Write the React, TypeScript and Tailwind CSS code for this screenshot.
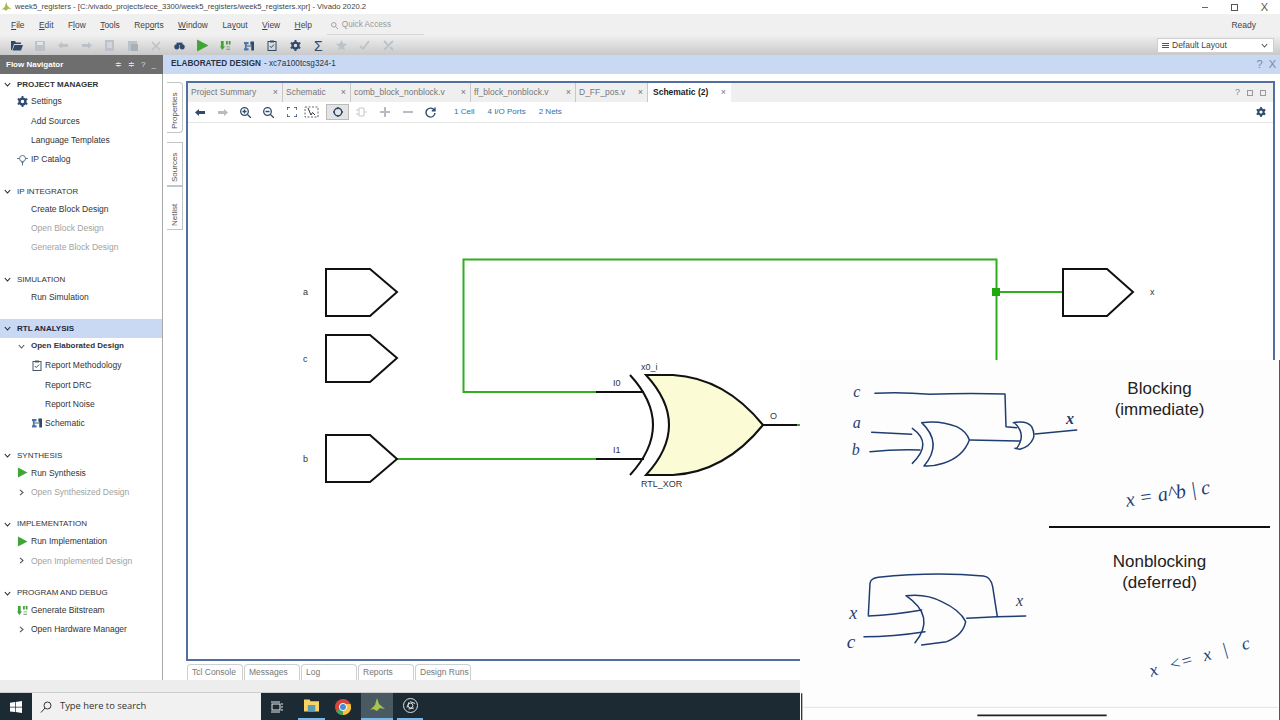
import type { ReactNode } from 'react'

const font = "font-['Liberation_Sans',Arial,sans-serif]"

const Play = ({ size = 11 }: { size?: number }) => (
  <svg width={size} height={size} viewBox="0 0 12 12">
    <path d="M1 0.5 L11.5 6 L1 11.5 Z" fill="#3fa535" />
  </svg>
)

const Gear = ({ size = 11, color = '#2f4a6d' }: { size?: number; color?: string }) => (
  <svg width={size} height={size} viewBox="0 0 12 12">
    <circle cx="6" cy="6" r="3.2" fill="none" stroke={color} strokeWidth="2.6" />
    <path d="M6 0v2.4M6 9.6V12M0.8 3l2 1.2M9.2 7.8l2 1.2M0.8 9l2-1.2M9.2 4.2l2-1.2" stroke={color} strokeWidth="2" />
  </svg>
)

const Bits = () => (
  <svg width="11" height="11" viewBox="0 0 12 12">
    <path d="M1 1h3v6h1.5L2.5 11 0 7h1zM6.5 1h2v4h-2zM9.5 1h2v4h-2z" fill="#3fa535" />
    <path d="M7 7h4v1H7zM7 9.5h4v1H7z" fill="#7a8a7a" />
  </svg>
)

const SchemIcon = () => (
  <svg width="10" height="10" viewBox="0 0 11 11">
    <path d="M0 1h5v2.5H3V8h2v2.5H0V8h1V3.5H0z" fill="#4a76ab" />
    <path d="M7 0.5h4v10H8V4H7z" fill="#2f4a6d" />
    <path d="M3 5h5v1H3z" fill="#2f4a6d" />
  </svg>
)

const Report = ({ color = '#46576b' }: { color?: string }) => (
  <svg width="10" height="11" viewBox="0 0 10 11" fill="none">
    <rect x="1" y="1.5" width="8" height="9" stroke={color} />
    <rect x="3" y="0.5" width="4" height="2" fill={color} />
    <path d="M2.8 6l1.5 1.6L7 4.5" stroke={color} />
  </svg>
)

const Chip = () => (
  <svg width="11" height="12" viewBox="0 0 11 12" fill="none" stroke="#5d7692">
    <circle cx="5.5" cy="4.5" r="3" />
    <path d="M0 4.5h2.5M8.5 4.5H11M4 8h3M5.5 8v3.5" />
  </svg>
)

const Chevron = ({ open = true, dark = false }: { open?: boolean; dark?: boolean }) => (
  <svg width="7" height="7" viewBox="0 0 7 7" fill="none" stroke={dark ? '#222' : '#555'} strokeWidth="1.1">
    {open ? <path d="M0.8 2l2.7 3 2.7-3" /> : <path d="M2 0.8l3 2.7-3 2.7" />}
  </svg>
)

type NavItem = {
  label: string
  indent?: boolean
  icon?: ReactNode
  caret?: 'open' | 'closed'
  muted?: boolean
  bold?: boolean
}

type NavSection = { title: string; strong?: boolean; active?: boolean; gap: string; items: NavItem[] }

const sections: NavSection[] = [
  {
    title: 'PROJECT MANAGER',
    strong: true,
    gap: 'mt-0',
    items: [
      { label: 'Settings', icon: <Gear /> },
      { label: 'Add Sources' },
      { label: 'Language Templates' },
      { label: 'IP Catalog', icon: <Chip /> },
    ],
  },
  {
    title: 'IP INTEGRATOR',
    gap: 'mt-[14px]',
    items: [
      { label: 'Create Block Design' },
      { label: 'Open Block Design', muted: true },
      { label: 'Generate Block Design', muted: true },
    ],
  },
  { title: 'SIMULATION', gap: 'mt-[14px]', items: [{ label: 'Run Simulation' }] },
  {
    title: 'RTL ANALYSIS',
    strong: true,
    active: true,
    gap: 'mt-[12px]',
    items: [
      { label: 'Open Elaborated Design', caret: 'open', bold: true },
      { label: 'Report Methodology', indent: true, icon: <Report /> },
      { label: 'Report DRC', indent: true },
      { label: 'Report Noise', indent: true },
      { label: 'Schematic', indent: true, icon: <SchemIcon /> },
    ],
  },
  {
    title: 'SYNTHESIS',
    gap: 'mt-[14px]',
    items: [
      { label: 'Run Synthesis', icon: <Play /> },
      { label: 'Open Synthesized Design', caret: 'closed', muted: true },
    ],
  },
  {
    title: 'IMPLEMENTATION',
    gap: 'mt-[14px]',
    items: [
      { label: 'Run Implementation', icon: <Play /> },
      { label: 'Open Implemented Design', caret: 'closed', muted: true },
    ],
  },
  {
    title: 'PROGRAM AND DEBUG',
    gap: 'mt-[14px]',
    items: [
      { label: 'Generate Bitstream', icon: <Bits /> },
      { label: 'Open Hardware Manager', caret: 'closed' },
    ],
  },
]

function FlowNavigator() {
  return (
    <nav className="w-[163px] shrink-0 border-r border-[#a9a9a9] pt-[2px] bg-white">
      {sections.map((s) => (
        <div key={s.title} className={s.gap}>
          <div
            className={`flex items-center gap-[6px] pl-[4px] pt-[1px] ${
              s.active ? 'h-[19px] bg-[#c9d9f3] text-[#1c2740]' : 'h-[16px] text-[#333]'
            } ${s.strong ? 'font-bold' : ''} text-[8px]`}
          >
            <Chevron dark />
            <span>{s.title}</span>
          </div>
          <div className={s.active ? '-mt-[1px]' : ''}>
            {s.items.map((item) => (
              <div
                key={item.label}
                className={`relative flex h-[19.33px] items-center ${item.bold ? 'text-[8px] font-bold' : 'text-[8.5px]'} ${
                  item.indent ? 'pl-[45px]' : 'pl-[31px]'
                } ${item.muted ? 'text-[#a2a2a2]' : 'text-[#333]'}`}
              >
                {item.icon && (
                  <span className={`absolute top-[4px] ${item.indent ? 'left-[32px]' : 'left-[17px]'}`}>{item.icon}</span>
                )}
                {item.caret && (
                  <span className="absolute left-[18px] top-[6px]">
                    <Chevron open={item.caret === 'open'} />
                  </span>
                )}
                {item.label}
              </div>
            ))}
          </div>
        </div>
      ))}
    </nav>
  )
}

const Ic = ({ children, boxed }: { children: ReactNode; boxed?: boolean }) => (
  <div className={`flex h-[16px] w-[23px] shrink-0 items-center justify-center ${boxed ? 'bg-[#e4e4e4] border border-[#bbb]' : ''}`}>
    {children}
  </div>
)

function MainToolbar() {
  const dim = '#bcc2c9'
  return (
    <div className="flex h-[19px] items-center gap-[0.2px] pl-[5.5px] bg-gradient-to-b from-[#eeeeee] to-[#c9c9c9]">
      <Ic>
        <svg width="12" height="11" viewBox="0 0 12 11"><path d="M0 1h4l1 1.5h5V4H3L1 10H0zM3.5 5H12l-2 5.5H1.5z" fill="#2f4a6d" /></svg>
      </Ic>
      <Ic><svg width="10" height="10" viewBox="0 0 10 10"><rect width="10" height="10" fill={dim} /><rect x="2" y="1" width="6" height="3" fill="#e4e4e4" /></svg></Ic>
      <Ic><svg width="10" height="7" viewBox="0 0 10 7"><path d="M0 3.5L4 0v2h6v3H4v2z" fill={dim} /></svg></Ic>
      <Ic><svg width="10" height="7" viewBox="0 0 10 7"><path d="M10 3.5L6 0v2H0v3h6v2z" fill={dim} /></svg></Ic>
      <Ic><svg width="9" height="11" viewBox="0 0 9 11"><rect width="9" height="11" fill={dim} /><path d="M2 3h5M2 5h5M2 7h5" stroke="#e8e8e8" /></svg></Ic>
      <Ic><svg width="10" height="11" viewBox="0 0 10 11"><rect y="1" width="9" height="10" fill={dim} /><rect x="3" y="4" width="7" height="7" fill="#a8afb6" /></svg></Ic>
      <Ic><svg width="10" height="10" viewBox="0 0 10 10"><path d="M1 1l8 8M9 1l-8 8" stroke={dim} strokeWidth="1.6" /></svg></Ic>
      <Ic><svg width="11" height="8" viewBox="0 0 13 9"><circle cx="3.3" cy="5.5" r="3" fill="#2f4a6d" /><circle cx="9.7" cy="5.5" r="3" fill="#2f4a6d" /><rect x="3" y="0.5" width="7" height="3" fill="#2f4a6d" /></svg></Ic>
      <Ic><Play size={13} /></Ic>
      <Ic><Bits /></Ic>
      <Ic><SchemIcon /></Ic>
      <Ic><Report color="#2f4a6d" /></Ic>
      <Ic><Gear color="#2f4a6d" /></Ic>
      <Ic><span className="text-[14px] leading-none text-[#2f4a6d]">Σ</span></Ic>
      <Ic><svg width="11" height="11" viewBox="0 0 11 11"><path d="M5.5 0l1.6 3.6 3.9.4-3 2.6.9 3.9-3.4-2-3.4 2 .9-3.9-3-2.6 3.9-.4z" fill={dim} /></svg></Ic>
      <Ic><svg width="11" height="11" viewBox="0 0 11 11"><path d="M1 6l3 3 6-8" fill="none" stroke={dim} strokeWidth="1.8" /></svg></Ic>
      <Ic><svg width="11" height="11" viewBox="0 0 11 11"><path d="M1 10l9-9M1 1l4 4M7 7l3 3" stroke={dim} strokeWidth="1.8" /></svg></Ic>
      <div className="ml-auto mr-[6px] flex h-[15px] w-[117px] items-center gap-[3px] border border-[#cfcfcf] bg-white pl-[4px] text-[8.5px] text-[#444]">
        <svg width="7" height="6" viewBox="0 0 7 6"><path d="M0 .5h7M0 2.5h7M0 4.5h7" stroke="#555" /></svg>
        <span>Default Layout</span>
        <span className="ml-auto mr-[5px]"><Chevron /></span>
      </div>
    </div>
  )
}

const tabs = [
  { label: 'Project Summary', w: 'w-[95px]' },
  { label: 'Schematic', w: 'w-[68px]' },
  { label: 'comb_block_nonblock.v', w: 'w-[120px]' },
  { label: 'ff_block_nonblock.v', w: 'w-[105px]' },
  { label: 'D_FF_pos.v', w: 'w-[72px]' },
]

function SchematicDrawing() {
  const green = '#2fae1e'
  return (
    <svg viewBox="188 123 1085 537" className="h-[537px] w-[1085px]">
      <g fill="none" stroke={green} strokeWidth="2">
        <path d="M596 392H463.5V259.5H996.5V362" />
        <path d="M996 292H1063" />
        <path d="M397 459H596" />
        <path d="M797 425H802" />
      </g>
      <rect x="992" y="288" width="8" height="8" fill="#1fa80f" />
      <g fill="#fff" stroke="#111" strokeWidth="2">
        <path d="M326 269H370L397 292L370 316H326Z" />
        <path d="M326 335H370L397 358L370 382H326Z" />
        <path d="M326 435H370L397 459L370 482H326Z" />
        <path d="M1063 269H1107L1133 292L1107 316H1063Z" />
      </g>
      <g fill="none" stroke="#111" strokeWidth="2">
        <path d="M596 392H644M596 459H644M763 425H797" />
        <path d="M630 375Q676 425 630 475" />
        <path d="M646 375H673Q725 378 763 425Q725 472 673 475H646Q692 425 646 375Z" fill="#fbfbd6" />
      </g>
      <g fill="#333" fontSize="9" fontFamily="Liberation Sans, Arial, sans-serif">
        <text x="303" y="295">a</text>
        <text x="303" y="362">c</text>
        <text x="303" y="462">b</text>
        <text x="1150" y="295">x</text>
        <text x="641" y="370">x0_i</text>
        <text x="641" y="487">RTL_XOR</text>
        <text x="613" y="386">I0</text>
        <text x="613" y="453">I1</text>
        <text x="770" y="419">O</text>
      </g>
    </svg>
  )
}

function WhiteboardOverlay() {
  return (
    <div className="absolute bottom-0 right-0 flex h-[360px] w-[480px] justify-end border-r border-[#555] bg-[#fdfdfd]">
      <svg viewBox="0 0 1440 1080" className="absolute inset-0 h-[360px] w-[480px]">
        <g fill="none" stroke="#1f3d72" strokeWidth="4.5" strokeLinecap="round" strokeLinejoin="round">
          <path d="M225 100Q300 95 390 103Q500 98 615 102L618 200L650 203" />
          <path d="M215 217L335 223M210 275Q280 268 360 270" />
          <path d="M337 205Q400 250 337 310" />
          <path d="M365 188Q420 180 470 200Q500 215 508 240Q490 290 430 310Q400 320 372 318Q430 250 365 188" />
          <path d="M510 240L660 243" />
          <path d="M645 190Q680 225 650 265M640 188Q680 180 695 200Q705 220 700 235Q690 260 660 268L645 265" />
          <path d="M705 222L830 210" />
          <path d="M205 765L210 670Q212 655 235 652Q400 635 550 648Q572 650 578 680L592 770" />
          <path d="M205 768Q280 765 365 750M192 830Q280 830 375 815" />
          <path d="M318 707Q380 700 425 725Q480 750 497 785Q490 825 440 845L365 855M318 707Q410 770 345 848" />
          <path d="M500 775L590 770L677 768" />
        </g>
        <g fill="#1f3d72" fontFamily="Liberation Serif, serif" fontStyle="italic" fontSize="48">
          <text x="160" y="110">c</text>
          <text x="158" y="205">a</text>
          <text x="155" y="285">b</text>
          <text x="798" y="192" fontWeight="bold">x</text>
          <text x="148" y="778" fontSize="54">x</text>
          <text x="140" y="864" fontSize="58">c</text>
          <text x="648" y="738">x</text>
          <text x="980" y="440" fontSize="60" transform="rotate(-9 980 440)">x = a^b | c</text>
          <text x="1054" y="950" fontSize="54" transform="rotate(-16 1054 950)">
            x<tspan dx="37">&lt;=</tspan>
            <tspan dx="33">x</tspan>
            <tspan dx="36">|</tspan>
            <tspan dx="45">c</tspan>
          </text>
        </g>
        <path d="M5 1000V1080" stroke="#333" strokeWidth="4" />
        <path d="M10 1042H1435" stroke="#e2e4e8" strokeWidth="3" />
        <path d="M532 1066H920" stroke="#222" strokeWidth="5" />
      </svg>
      <div className="relative mr-[9px] flex w-[221px] flex-col text-center text-[17px] leading-[21px] text-[#222]">
        <div className="pt-[18px]">
          Blocking
          <br />
          (immediate)
        </div>
        <div className="mt-[106px] h-[2px] bg-[#111]" />
        <div className="pt-[23px]">
          Nonblocking
          <br />
          (deferred)
        </div>
      </div>
    </div>
  )
}

function Taskbar() {
  return (
    <div className="flex h-[27px] items-stretch bg-[#1c2b33]">
      <div className="flex w-[32px] items-center justify-center">
        <svg width="12" height="12" viewBox="0 0 12 12" fill="#fff"><path d="M0 1.7L5 1v4.7H0zM5.7.9L12 0v5.7H5.7zM0 6.4h5v4.7l-5-.7zM5.7 6.4H12V12l-6.3-.9z" /></svg>
      </div>
      <div className="flex w-[229px] items-center gap-[8px] bg-[#f1f1f1] pl-[8px] text-[9.4px] text-[#333]">
        <svg width="12" height="12" viewBox="0 0 12 12" fill="none" stroke="#333"><circle cx="7.5" cy="4.5" r="3.5" /><path d="M5 7l-4 4.5" /></svg>
        <span className="font-['Open_Sans',sans-serif]">Type here to search</span>
      </div>
      <div className="flex w-[37px] items-center justify-center pr-[5px]">
        <svg width="12" height="12" viewBox="0 0 12 12" fill="none" stroke="#e8e8e8"><rect x="1" y="3" width="8" height="6" /><path d="M0 1h9M0 11h9M11 2v2M11 5v2M11 8v2" /></svg>
      </div>
      <div className="flex w-[27px] items-center justify-center border-b-2 border-[#76b9ed]">
        <svg width="15" height="13" viewBox="0 0 16 13"><path d="M0 0h6l1 2h9v11H0z" fill="#f6d365" /><rect x="4" y="6" width="8" height="7" fill="#5b9bb5" /></svg>
      </div>
      <div className="flex w-[36px] items-center justify-center">
        <svg width="16" height="16" viewBox="0 0 16 16">
          <circle cx="8" cy="8" r="8" fill="#d9453a" />
          <path d="M8 8L1 12A8 8 0 0 0 8 16L12 8z" fill="#3aa757" />
          <path d="M8 16A8 8 0 0 0 15.5 5H8z" fill="#f5c33b" />
          <circle cx="8" cy="8" r="3.6" fill="#4a89dc" stroke="#fff" />
        </svg>
      </div>
      <div className="flex w-[32px] items-center justify-center border-b-2 border-[#76b9ed] bg-[#4a5a62]">
        <svg width="15" height="15" viewBox="0 0 15 15"><path d="M7 0l2 6 6 5-5-1-3 3-4-2-3 1 5-5z" fill="#a8c44a" /></svg>
      </div>
      <div className="ml-[4px] flex w-[26px] items-center justify-center border-b-2 border-[#76b9ed]">
        <svg width="15" height="15" viewBox="0 0 15 15" fill="none" stroke="#ddd"><circle cx="7.5" cy="7.5" r="7" /><circle cx="7.5" cy="7.5" r="2.4" /><path d="M7 3.5l5 2M4 9.5L6 4M11 10L5.5 11" /></svg>
      </div>
    </div>
  )
}

export default function App() {
  // before, mnemonic letter, after
  const menus = [
    ['', 'F', 'ile'],
    ['', 'E', 'dit'],
    ['F', 'l', 'ow'],
    ['', 'T', 'ools'],
    ['Rep', 'o', 'rts'],
    ['', 'W', 'indow'],
    ['La', 'y', 'out'],
    ['', 'V', 'iew'],
    ['', 'H', 'elp'],
  ]
  return (
    <div className={`relative flex h-[720px] w-[1280px] flex-col overflow-hidden bg-white ${font}`}>
      {/* title bar */}
      <div className="flex h-[14px] items-center bg-white pl-[1px] text-[7.7px] text-[#444]">
        <svg width="11" height="10" viewBox="0 0 15 15"><path d="M7 0l2 6 6 5-5-1-3 3-4-2-3 1 5-5z" fill="#a8b84a" /></svg>
        <span className="ml-[3px]">week5_registers - [C:/vivado_projects/ece_3300/week5_registers/week5_registers.xpr] - Vivado 2020.2</span>
        <div className="ml-auto mr-[12px] flex items-center gap-[23px] text-[#555]">
          <span className="h-px w-[6px] bg-[#666]" />
          <span className="h-[7px] w-[7px] border border-[#555]" />
          <span className="text-[11px] leading-none">X</span>
        </div>
      </div>

      {/* menu bar */}
      <div className="flex h-[22px] items-center bg-[#f0f0f0] pl-[11px] pt-[1px] text-[8.4px] text-[#444]">
        <div className="flex gap-[14.5px]">
          {menus.map(([a, b, c]) => (
            <span key={a + b + c}>
              {a}
              <u>{b}</u>
              {c}
            </span>
          ))}
        </div>
        <div className="ml-[15px] flex h-[18px] w-[97px] items-center gap-[4px] border-b border-[#d5d5d5] pl-[4px] text-[8.2px] text-[#999]">
          <svg width="7" height="7" viewBox="0 0 8 8" fill="none" stroke="#999"><circle cx="3.2" cy="3.2" r="2.6" /><path d="M5 5l3 3" /></svg>
          Quick Access
        </div>
        <span className="ml-auto mr-[24px] text-[8.5px] text-[#444]">Ready</span>
      </div>

      <MainToolbar />

      {/* header bars */}
      <div className="flex h-[19px] items-stretch">
        <div className="flex w-[163px] items-center bg-[#6e6e6e] pl-[6px] pr-[7px] text-[8px] font-bold text-white">
          <span>Flow Navigator</span>
          <span className="ml-auto flex items-center gap-[6px] font-normal text-[#ddd]">
            <span>≑</span><span>≑</span><span>?</span><span>_</span>
          </span>
        </div>
        <div className="flex flex-1 items-center bg-[#c9d9f3] pl-[8px] pr-[4px] text-[8.2px] text-[#2a3344]">
          <span className="font-bold">ELABORATED DESIGN</span>
          <span className="ml-[3px]">- xc7a100tcsg324-1</span>
          <span className="ml-auto text-[11px] text-[#7c8798]">? &nbsp;X</span>
        </div>
      </div>

      {/* workspace */}
      <div className="flex h-[606px]">
        <FlowNavigator />
        <div className="flex w-[23px] shrink-0 flex-col pl-[4px] pt-[8px] text-[8px] text-[#555]">
          <div className="flex h-[51px] w-[16px] rotate-180 items-center justify-start rounded-l-sm border border-r-0 border-[#c4c4c4] pt-[3px] [writing-mode:vertical-rl]">Properties</div>
          <div className="mt-[9px] flex h-[44px] w-[16px] rotate-180 items-center justify-start border border-r-0 border-[#c4c4c4] pt-[3px] [writing-mode:vertical-rl]">Sources</div>
          <div className="flex h-[44px] w-[16px] rotate-180 items-center justify-start border border-r-0 border-[#c4c4c4] pt-[3px] [writing-mode:vertical-rl]">Netlist</div>
        </div>
        <div className="flex flex-1 flex-col pr-[6px] pt-[7px]">
          <div className="flex h-[580px] flex-col border-2 border-[#51709f]">
            <div className="flex h-[19px] items-stretch bg-[#efefef] text-[8.5px] text-[#777]">
              {tabs.map((t) => (
                <div key={t.label} className={`flex items-center justify-between border-r border-[#c8c8c8] pl-[3px] pr-[4px] ${t.w}`}>
                  <span>{t.label}</span>
                  <span className="text-[9px]">×</span>
                </div>
              ))}
              <div className="flex w-[83px] items-center justify-between bg-white pl-[5px] pr-[5px] font-bold text-[#222]">
                <span>Schematic (2)</span>
                <span className="font-normal text-[#777] text-[9px]">×</span>
              </div>
              <div className="ml-auto mr-[7px] flex items-center gap-[7px] text-[#888]">
                <span className="text-[9px]">?</span>
                <span className="h-[6px] w-[6px] border border-[#999]" />
                <span className="h-[6px] w-[6px] border border-[#999]" />
              </div>
            </div>
            <div className="flex h-[21px] items-center border-b border-[#e6e6e6] text-[8px] text-[#2f6fb0]">
              <Ic><svg width="10" height="7" viewBox="0 0 10 7"><path d="M0 3.5L4 0v2h6v3H4v2z" fill="#2f4a6d" /></svg></Ic>
              <Ic><svg width="10" height="7" viewBox="0 0 10 7"><path d="M10 3.5L6 0v2H0v3h6v2z" fill="#b5bcc4" /></svg></Ic>
              <Ic><svg width="11" height="11" viewBox="0 0 11 11" fill="none" stroke="#2f4a6d" strokeWidth="1.3"><circle cx="4.5" cy="4.5" r="3.8" /><path d="M7.5 7.5L11 11M2.5 4.5h4M4.5 2.5v4" /></svg></Ic>
              <Ic><svg width="11" height="11" viewBox="0 0 11 11" fill="none" stroke="#2f4a6d" strokeWidth="1.3"><circle cx="4.5" cy="4.5" r="3.8" /><path d="M7.5 7.5L11 11M2.5 4.5h4" /></svg></Ic>
              <Ic><svg width="10" height="10" viewBox="0 0 10 10" fill="none" stroke="#2f4a6d" strokeWidth="1.4"><path d="M0 3V0h3M7 0h3v3M10 7v3H7M3 10H0V7" /></svg></Ic>
              <div className="-ml-[3px]"><Ic><svg width="15" height="12" viewBox="0 0 15 12" fill="none" stroke="#667"><path d="M1 1h13v10H1z" strokeDasharray="2 1.5" /><path d="M4 2l3 7 1.5-2.5L11 9" stroke="#333" /></svg></Ic></div>
              <div className="ml-[3px] mr-[1px]"><Ic boxed><svg width="10" height="10" viewBox="0 0 10 10" fill="none" stroke="#2f4a6d" strokeWidth="1.4"><circle cx="5" cy="5" r="3.8" /><path d="M5 0v2M5 8v2M0 5h2M8 5h2" /></svg></Ic></div>
              <Ic><svg width="11" height="10" viewBox="0 0 11 10" fill="none" stroke="#c3c8ce"><path d="M3 1h5v8H3zM0 3h3M0 7h3M8 5h3" /></svg></Ic>
              <Ic><svg width="10" height="10" viewBox="0 0 10 10"><path d="M4 0h2v4h4v2H6v4H4V6H0V4h4z" fill="#b5bcc4" /></svg></Ic>
              <Ic><svg width="10" height="2" viewBox="0 0 10 2"><rect width="10" height="2" fill="#b5bcc4" /></svg></Ic>
              <Ic><svg width="11" height="11" viewBox="0 0 11 11" fill="none" stroke="#2f4a6d" strokeWidth="1.4"><path d="M9.5 3.5A4.5 4.5 0 1 0 10 6M10 0.5v3.2H6.8" /></svg></Ic>
              <div className="ml-[12px] flex gap-[13px]">
                <span>1 Cell</span>
                <span>4 I/O Ports</span>
                <span>2 Nets</span>
              </div>
              <div className="ml-auto mr-[7px]"><Gear size={10} /></div>
            </div>
            <div className="flex-1 overflow-hidden bg-white">
              <SchematicDrawing />
            </div>
          </div>
          <div className="mt-[3px] flex gap-[1px] pl-[1px] text-[8.5px] text-[#777]">
            {['Tcl Console', 'Messages', 'Log', 'Reports', 'Design Runs'].map((t) => (
              <div key={t} className="flex h-[16px] w-[56px] items-center rounded-t-sm border border-b-0 border-[#cfcfcf] pl-[4px]">
                {t}
              </div>
            ))}
          </div>
        </div>
      </div>

      <div className="h-[13px] border-b border-[#cdcdcd] bg-[#ededed]" />
      <Taskbar />
      <WhiteboardOverlay />
    </div>
  )
}
